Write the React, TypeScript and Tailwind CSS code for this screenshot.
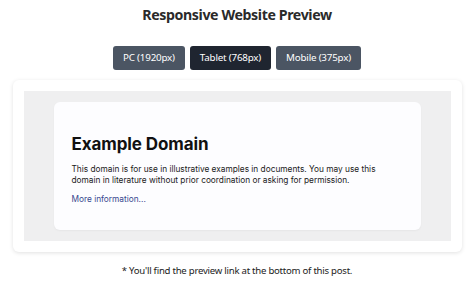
import { useState } from 'react';

const modes = [
  { id: 'pc', label: 'PC (1920px)' },
  { id: 'tablet', label: 'Tablet (768px)' },
  { id: 'mobile', label: 'Mobile (375px)' },
];

export default function App() {
  const [mode, setMode] = useState('tablet');

  return (
    <div className="flex h-[286px] w-[474px] flex-col items-center bg-white font-['Noto_Sans',sans-serif] text-[#222]">
      <h1 className="mt-[3px] text-[14.2px] font-bold leading-[24px] tracking-[-0.4px] text-[#2a2a2a]">
        Responsive Website Preview
      </h1>

      <div className="mt-[19px] flex gap-[5px]">
        {modes.map((m) => (
          <button
            key={m.id}
            onClick={() => setMode(m.id)}
            className={
              'h-[24px] rounded-[3px] px-[10px] text-[9.8px] leading-[24px] tracking-[-0.2px] text-white ' +
              (mode === m.id ? 'bg-[#1f2530]' : 'bg-[#4b5563]')
            }
          >
            {m.label}
          </button>
        ))}
      </div>

      <div className="mt-[10px] w-[449px] rounded-[6px] bg-white p-[11px] shadow-[0_1px_4px_rgba(0,0,0,0.12)]">
        <div className="flex h-[150px] justify-center bg-[#efeff0] py-[11px]">
          <div className="w-[367px] rounded-[6px] bg-[#fdfdff] px-[18px] pt-[30px] font-['Inter',sans-serif] shadow-[0_1px_2px_rgba(0,0,0,0.04)]">
            <h2 className="text-[17px] font-bold leading-[24px] tracking-[-0.1px] text-[#111]">Example Domain</h2>
            <p className="mt-[8px] w-[308px] text-[8.3px] leading-[10.5px] text-[#1a1a1a]">
              This domain is for use in illustrative examples in documents. You may use this
              domain in literature without prior coordination or asking for permission.
            </p>
            <a href="#" className="mt-[9px] block text-[8.3px] leading-[10.5px] text-[#38488f]">
              More information...
            </a>
          </div>
        </div>
      </div>

      <p className="mt-[11px] text-[9.6px] leading-[16px] tracking-[-0.25px] text-[#222]">
        * You'll find the preview link at the bottom of this post.
      </p>
    </div>
  );
}
